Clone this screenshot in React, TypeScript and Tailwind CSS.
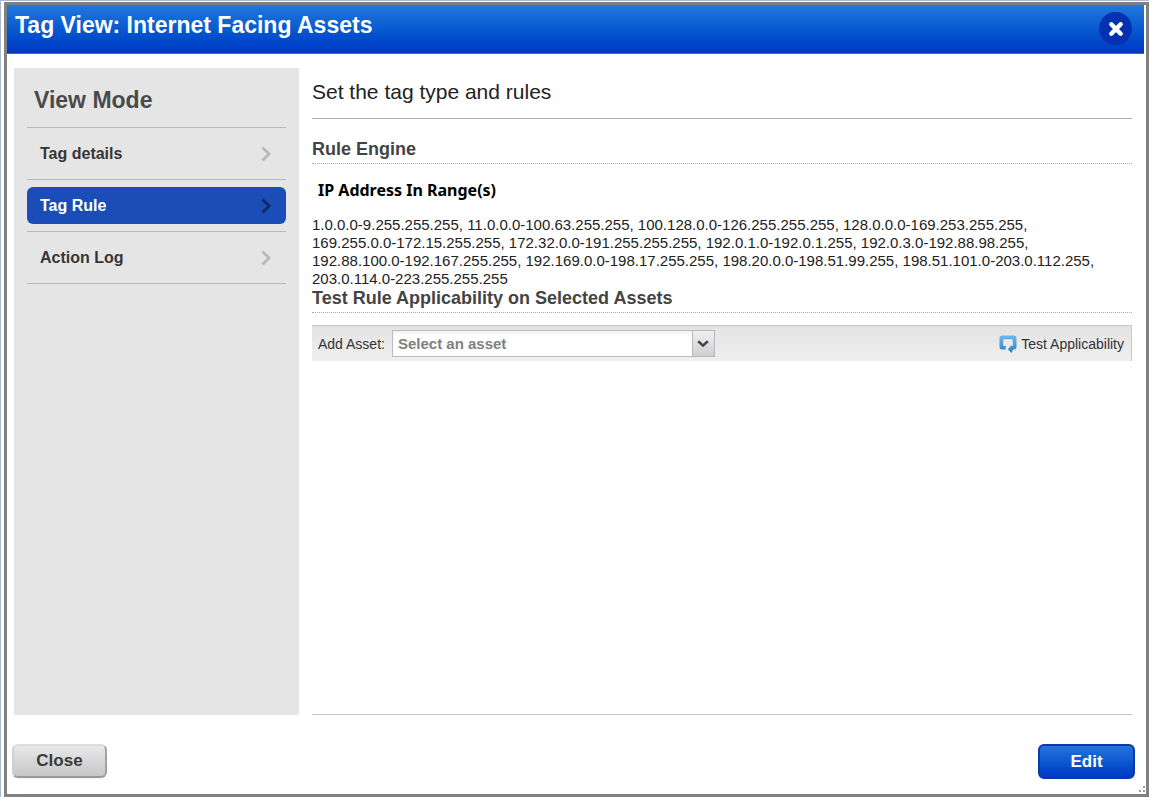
import React from "react";

type NavItem = { label: string; active?: boolean };

const navItems: NavItem[] = [
  { label: "Tag details" },
  { label: "Tag Rule", active: true },
  { label: "Action Log" },
];

const ipRanges = [
  "1.0.0.0-9.255.255.255",
  "11.0.0.0-100.63.255.255",
  "100.128.0.0-126.255.255.255",
  "128.0.0.0-169.253.255.255",
  "169.255.0.0-172.15.255.255",
  "172.32.0.0-191.255.255.255",
  "192.0.1.0-192.0.1.255",
  "192.0.3.0-192.88.98.255",
  "192.88.100.0-192.167.255.255",
  "192.169.0.0-198.17.255.255",
  "198.20.0.0-198.51.99.255",
  "198.51.101.0-203.0.112.255",
  "203.0.114.0-223.255.255.255",
];

function Chevron({ active }: { active?: boolean }) {
  return (
    <svg
      viewBox="0 0 10 16"
      className={active ? "h-4 w-[10px] text-[#0b2a66]" : "h-4 w-[10px] text-[#b9b9b9]"}
      fill="none"
      stroke="currentColor"
      strokeWidth="2.8"
      aria-hidden="true"
    >
      <path d="M1.5 1.5 8 8l-6.500 6.500" />
    </svg>
  );
}

function Header() {
  return (
    <header className="mr-[2px] flex h-[49px] items-start justify-between border-b border-[#4a62b8] bg-gradient-to-b from-[#2278dc] to-[#0036c4] pr-3 pl-2">
      <h1 className="pt-1 text-[23px] leading-8 font-bold text-white">
        Tag View: Internet Facing Assets
      </h1>
      <button
        type="button"
        aria-label="Close dialog"
        className="mt-[7px] flex size-[33px] items-center justify-center rounded-full bg-[#0530b0]"
      >
        <svg viewBox="0 0 16 16" className="size-4" stroke="#fff" strokeWidth="4.400" strokeLinecap="round" aria-hidden="true">
          <path d="M3.300 3.300l9.400 9.400M12.700 3.300l-9.400 9.400" />
        </svg>
      </button>
    </header>
  );
}

function Sidebar() {
  return (
    <aside className="w-[285px] shrink-0 bg-[#e5e5e5] px-[13px] pt-4">
      <h2 className="border-b border-[#b8b8b8] px-[7px] pb-[11px] text-[23px] leading-8 font-bold text-[#4a4a4a]">
        View Mode
      </h2>
      <nav>
        <ul>
          {navItems.map((item) => (
            <li key={item.label} className="border-b border-[#b8b8b8] py-[7px]">
              <a
                href="#"
                aria-current={item.active ? "page" : undefined}
                className={
                  item.active
                    ? "flex h-[37px] items-center justify-between rounded-md bg-[#1a4db8] pr-[15px] pl-[13px] text-base font-bold text-white"
                    : "flex h-[37px] items-center justify-between rounded-md pr-[15px] pl-[13px] text-base font-bold text-[#363636]"
                }
              >
                {item.label}
                <Chevron active={item.active} />
              </a>
            </li>
          ))}
        </ul>
      </nav>
    </aside>
  );
}

function SectionTitle({ children }: { children: React.ReactNode }) {
  return (
    <h3 className="border-b border-dotted border-[#a8a8a8] pb-[2px] text-lg leading-6 font-bold text-[#444]">
      {children}
    </h3>
  );
}

function ReturnIcon() {
  return (
    <svg viewBox="0 0 20 20" className="size-5" fill="none" aria-hidden="true">
      <defs>
        <linearGradient id="loop" x1="0" y1="0" x2="0" y2="1">
          <stop offset="0" stopColor="#69b8ec" />
          <stop offset="1" stopColor="#2f80c4" />
        </linearGradient>
      </defs>
      <path
        d="M4 1.500h12a2.500 2.500 0 0 1 2.500 2.500v9a2.500 2.500 0 0 1-2.500 2.500h-.8L13.500 19 9.800 15.300l3.700-4.300v1h.7a.6.6 0 0 0 .6-.6V6.200a1 1 0 0 0-1-1H6.200a1 1 0 0 0-1 1v4.700a1 1 0 0 0 1 1H7.800v3.600H4A2.500 2.500 0 0 1 1.500 13V4A2.500 2.500 0 0 1 4 1.500z"
        fill="url(#loop)"
      />
    </svg>
  );
}

function AssetToolbar() {
  return (
    <div className="mt-3 flex h-9 items-center justify-between border-t border-r border-[#c8c8c8] bg-gradient-to-b from-[#e3e3e3] to-[#efefef] pr-[7px] pl-[6px] text-sm text-[#333]">
      <div className="flex items-center gap-[7px]">
        <label htmlFor="asset">Add Asset:</label>
        <div className="relative">
          <select
            id="asset"
            defaultValue=""
            className="block h-[27px] w-[323px] appearance-none border border-[#b9bcc8] bg-gradient-to-b from-[#f1f1f1] to-white to-20% pr-7 pl-[5px] text-[15px] font-bold text-[#808080]"
          >
            <option value="">Select an asset</option>
          </select>
          <span className="pointer-events-none absolute inset-y-0 right-0 flex w-[23px] items-center justify-center border border-[#b5b7c0] bg-gradient-to-b from-[#f0f0f0] to-[#cfcfcf]">
            <svg viewBox="0 0 12 8" className="h-2 w-3" fill="none" stroke="#444" strokeWidth="2.600" aria-hidden="true">
              <path d="M1.200 1.300 6 5.600l4.800-4.300" />
            </svg>
          </span>
        </div>
      </div>
      <button type="button" className="flex items-center gap-[3px]">
        <ReturnIcon />
        Test Applicability
      </button>
    </div>
  );
}

function RulePanel() {
  return (
    <main className="min-w-0 flex-1 border-b border-[#c4c4c4]">
      <p className="border-b border-[#b0b0b0] pt-2 pb-[10px] text-[21px] leading-8 text-[#222]">
        Set the tag type and rules
      </p>
      <section className="pt-[18px]">
        <SectionTitle>Rule Engine</SectionTitle>
        <h4 className="px-[6px] py-[14px] font-['Noto_Sans',sans-serif] text-base leading-6 font-bold text-black">
          IP Address In Range(s)
        </h4>
        <p className="text-[15px] leading-[18px] text-[#222]">
          {ipRanges.map((range, i) => (
            <React.Fragment key={range}>
              <span className="whitespace-nowrap">
                {i < ipRanges.length - 1 ? `${range},` : range}
              </span>{" "}
            </React.Fragment>
          ))}
        </p>
      </section>
      <section className="-mt-[2px]">
        <SectionTitle>Test Rule Applicability on Selected Assets</SectionTitle>
        <AssetToolbar />
      </section>
    </main>
  );
}

function Footer() {
  return (
    <footer className="flex h-[79px] items-start justify-between pt-[29px] pr-[11px] pl-[5px]">
      <button
        type="button"
        className="h-[34px] w-[95px] rounded-md border-2 border-t-[#dedede] border-r-[#a2a2a2] border-b-[#999] border-l-[#d0d0d0] bg-gradient-to-b from-[#e9e9e9] to-[#c6c6c6] text-[17px] font-bold text-[#3a3a3a] shadow-xs"
      >
        Close
      </button>
      <button
        type="button"
        className="h-[35px] w-[97px] rounded-md border-2 border-[#0a3aa8] bg-gradient-to-b from-[#2474da] to-[#0238c6] text-[17px] font-bold text-white"
      >
        Edit
      </button>
    </footer>
  );
}

export default function App() {
  return (
    <div className="flex min-h-screen flex-col border-t border-l border-[#a9b9cb] bg-white pt-px pl-[3px] font-['Liberation_Sans',Arial,sans-serif]">
      <div className="relative flex flex-1 flex-col border-[3px] border-[#808080]">
        <Header />
        <div className="flex flex-1 gap-[13px] pt-[14px] pr-[14px] pl-[7px]">
          <Sidebar />
          <RulePanel />
        </div>
        <Footer />
        <svg viewBox="0 0 8 8" className="absolute right-0 bottom-0 size-2" fill="#999" aria-hidden="true">
          <path d="M5 0h2v2H5zM5 4h2v2H5zM1 4h2v2H1z" />
        </svg>
      </div>
    </div>
  );
}
